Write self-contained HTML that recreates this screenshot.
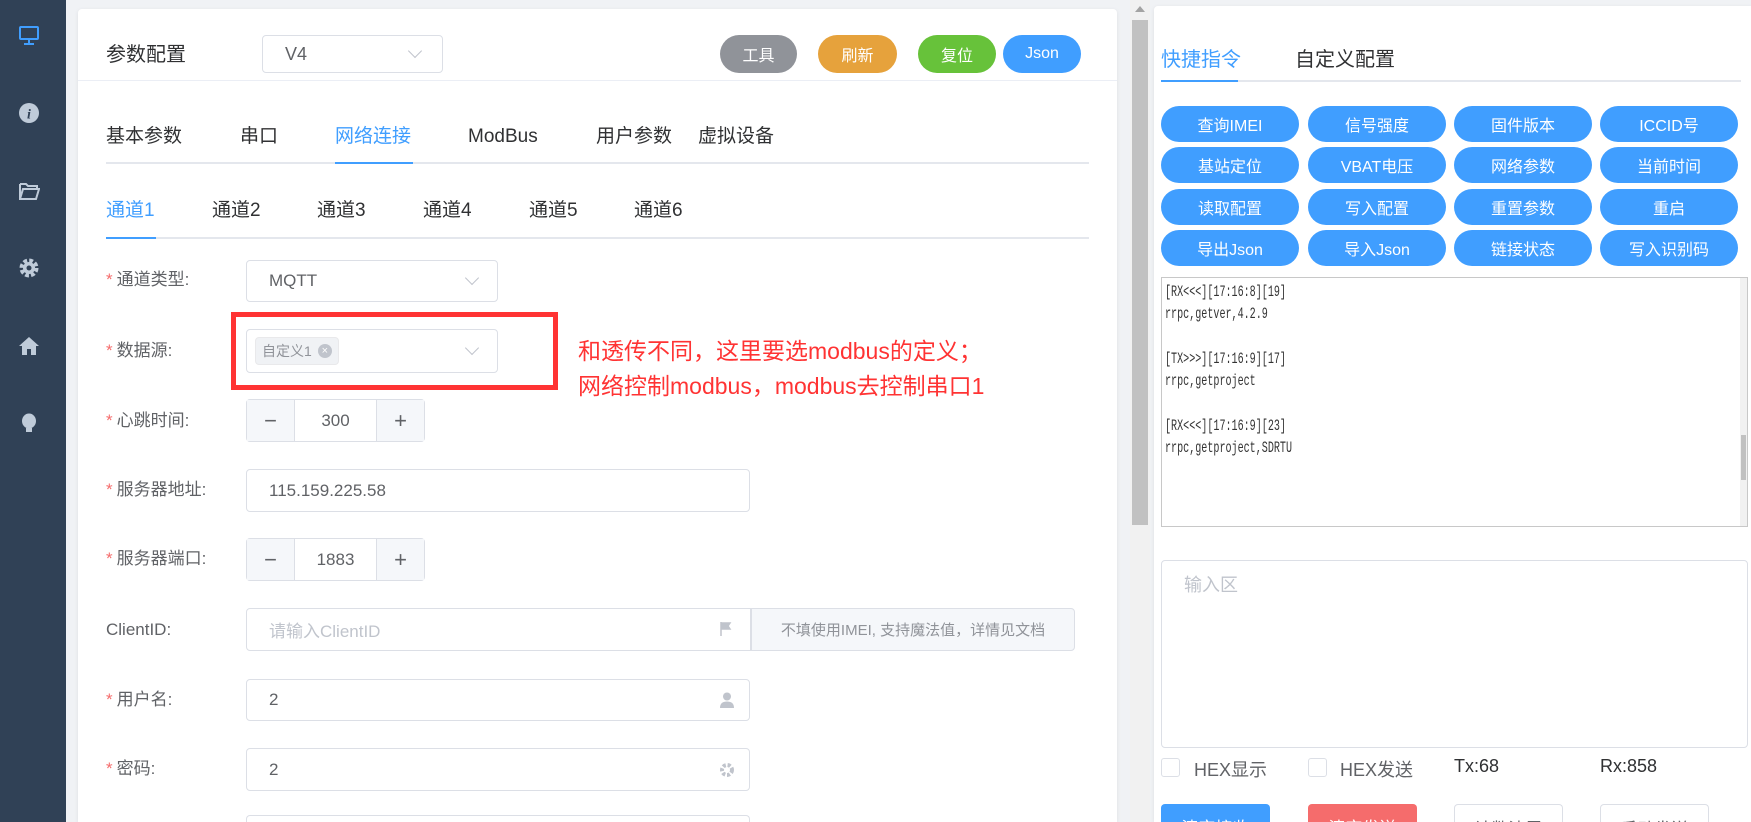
<!DOCTYPE html>
<html><head><meta charset="utf-8"><style>
*{box-sizing:border-box;margin:0;padding:0}
html,body{width:1751px;height:822px;overflow:hidden}
body{background:#f0f2f5;font-family:"Liberation Sans","Noto Sans CJK SC",sans-serif;position:relative;color:#303133}
.a{position:absolute}
.side{left:0;top:0;width:66px;height:822px;background:#304156}
.card{background:#fff;border-radius:4px;box-shadow:0 1px 4px rgba(0,0,0,.08)}
.btn{position:absolute;border-radius:20px;color:#fff;font-size:16px;display:flex;align-items:center;justify-content:center}
.inp{position:absolute;border:1px solid #dcdfe6;border-radius:4px;background:#fff;font-size:17px;color:#606266;display:flex;align-items:center;padding-left:22px}
.lbl{position:absolute;font-size:17px;color:#606266;left:106px;line-height:24px}
.lbl b{color:#f56c6c;font-weight:normal;margin-right:4px}
.tab{position:absolute;font-size:19px;color:#303133;line-height:26px;height:26px}
.num{position:absolute;border:1px solid #dcdfe6;border-radius:4px;background:#fff;display:flex;font-size:17px;color:#606266}
.num span{width:47px;background:#f5f7fa;display:flex;align-items:center;justify-content:center;font-size:22px;color:#606266}
.num i{flex:1;font-style:normal;display:flex;align-items:center;justify-content:center;border-left:1px solid #dcdfe6;border-right:1px solid #dcdfe6}
.chev{position:absolute;width:10px;height:10px;border-right:1.5px solid #c0c4cc;border-bottom:1.5px solid #c0c4cc;transform:rotate(45deg)}
.qb{position:absolute;width:138px;height:36px;background:#409eff;border-radius:18px;color:#fff;font-size:16px;display:flex;align-items:center;justify-content:center}
.log{font-family:"Liberation Mono",monospace;font-size:16px;line-height:22.3px;color:#333;transform:scaleX(0.63);transform-origin:0 0;white-space:pre}
.cb{position:absolute;width:19px;height:19px;border:1px solid #dcdfe6;border-radius:3px;background:#fff}
</style></head><body>
<div class="a side">
<svg class="a" style="left:18px;top:24px" width="22" height="22" viewBox="0 0 22 22" fill="none" stroke="#409eff" stroke-width="2"><rect x="2" y="3" width="18" height="12" rx="1"/><path d="M11 15v4M6 20h10"/></svg>
<svg class="a" style="left:19px;top:103px" width="20" height="20" viewBox="0 0 20 20"><circle cx="10" cy="10" r="10" fill="#bfcbd9"/><text x="10" y="15.5" text-anchor="middle" font-family="Liberation Serif" font-style="italic" font-weight="bold" font-size="14" fill="#304156">i</text></svg>
<svg class="a" style="left:18px;top:181px" width="22" height="20" viewBox="0 0 22 20" fill="none" stroke="#bfcbd9" stroke-width="2"><path d="M2 3h6l2 2h9v3M2 3v15h16l3-10H5L2 18"/></svg>
<svg class="a" style="left:18px;top:257px" width="22" height="22" viewBox="0 0 22 22"><circle cx="11" cy="11" r="7" fill="none" stroke="#bfcbd9" stroke-width="5" stroke-dasharray="3.5 2"/><circle cx="11" cy="11" r="6" fill="#bfcbd9"/><circle cx="11" cy="11" r="2.5" fill="#304156"/></svg>
<svg class="a" style="left:18px;top:336px" width="22" height="20" viewBox="0 0 22 20"><path d="M11 1L1 10h3v9h5v-6h4v6h5v-9h3z" fill="#bfcbd9"/></svg>
<svg class="a" style="left:20px;top:413px" width="18" height="22" viewBox="0 0 18 22"><ellipse cx="9" cy="8" rx="7" ry="7.5" fill="#bfcbd9"/><rect x="6" y="15" width="6" height="4" fill="#bfcbd9"/></svg>
</div>

<div class="a card" style="left:78px;top:9px;width:1039px;height:813px;border-radius:4px 4px 0 0"></div>
<div class="a" style="left:106px;top:38px;font-size:20px;color:#303133">参数配置</div>
<div class="inp" style="left:262px;top:35px;width:181px;height:38px;font-size:18px">V4</div>
<div class="chev" style="left:410px;top:46px"></div>
<div class="btn" style="left:720px;top:35px;width:77px;height:38px;background:#909399">工具</div>
<div class="btn" style="left:818px;top:35px;width:79px;height:38px;background:#e6a23c">刷新</div>
<div class="btn" style="left:918px;top:35px;width:78px;height:38px;background:#67c23a">复位</div>
<div class="btn" style="left:1003px;top:35px;width:78px;height:38px;background:#409eff">Json</div>
<div class="a" style="left:78px;top:80px;width:1039px;height:1px;background:#ebeef5"></div>

<div class="tab" style="left:106px;top:124px">基本参数</div>
<div class="tab" style="left:240px;top:124px">串口</div>
<div class="tab" style="left:335px;top:124px;color:#409eff">网络连接</div>
<div class="tab" style="left:468px;top:124px">ModBus</div>
<div class="tab" style="left:596px;top:124px">用户参数</div>
<div class="tab" style="left:698px;top:124px">虚拟设备</div>
<div class="a" style="left:106px;top:162px;width:983px;height:2px;background:#e4e7ed"></div>
<div class="a" style="left:335px;top:162px;width:78px;height:2px;background:#409eff"></div>

<div class="tab" style="left:106px;top:198px;color:#409eff">通道1</div>
<div class="tab" style="left:212px;top:198px">通道2</div>
<div class="tab" style="left:317px;top:198px">通道3</div>
<div class="tab" style="left:423px;top:198px">通道4</div>
<div class="tab" style="left:529px;top:198px">通道5</div>
<div class="tab" style="left:634px;top:198px">通道6</div>
<div class="a" style="left:106px;top:237px;width:983px;height:2px;background:#e4e7ed"></div>
<div class="a" style="left:106px;top:237px;width:50px;height:2px;background:#409eff"></div>

<div class="lbl" style="top:268px"><b>*</b>通道类型:</div>
<div class="inp" style="left:246px;top:260px;width:252px;height:42px">MQTT</div>
<div class="chev" style="left:467px;top:273px"></div>

<div class="lbl" style="top:339px"><b>*</b>数据源:</div>
<div class="inp" style="left:246px;top:329px;width:252px;height:44px;padding-left:8px"><span style="background:#f0f2f5;border:1px solid #e9e9eb;border-radius:4px;font-size:14px;color:#909399;padding:3px 6px;display:flex;align-items:center">自定义1<span style="display:inline-block;width:14px;height:14px;border-radius:7px;background:#c0c4cc;color:#fff;font-size:11px;line-height:14px;text-align:center;margin-left:6px">×</span></span></div>
<div class="chev" style="left:467px;top:343px"></div>
<div class="a" style="left:231px;top:312px;width:327px;height:78px;border:5px solid #f33"></div>
<div class="a" style="left:578px;top:334px;font-size:23px;color:#f33;line-height:35px">和透传不同，这里要选modbus的定义；<br>网络控制modbus，modbus去控制串口1</div>

<div class="lbl" style="top:409px"><b>*</b>心跳时间:</div>
<div class="num" style="left:246px;top:399px;width:179px;height:43px"><span>−</span><i>300</i><span>+</span></div>

<div class="lbl" style="top:478px"><b>*</b>服务器地址:</div>
<div class="inp" style="left:246px;top:469px;width:504px;height:43px">115.159.225.58</div>

<div class="lbl" style="top:547px"><b>*</b>服务器端口:</div>
<div class="num" style="left:246px;top:538px;width:179px;height:43px"><span>−</span><i>1883</i><span>+</span></div>

<div class="lbl" style="top:618px">ClientID:</div>
<div class="inp" style="left:246px;top:608px;width:505px;height:43px;color:#c0c4cc;border-radius:4px 0 0 4px">请输入ClientID</div>
<svg class="a" style="left:720px;top:622px" width="12" height="14" viewBox="0 0 12 14"><path d="M1 0v14M1 1h9l-2 3 2 3H1" fill="#c0c4cc" stroke="#c0c4cc" stroke-width="1.5"/></svg>
<div class="a" style="left:751px;top:608px;width:324px;height:43px;background:#f5f7fa;border:1px solid #dcdfe6;border-radius:0 4px 4px 0;font-size:15px;color:#909399;display:flex;align-items:center;justify-content:center">不填使用IMEI, 支持魔法值，详情见文档</div>

<div class="lbl" style="top:688px"><b>*</b>用户名:</div>
<div class="inp" style="left:246px;top:679px;width:504px;height:42px">2</div>
<svg class="a" style="left:720px;top:692px" width="14" height="16" viewBox="0 0 14 16"><circle cx="7" cy="4.5" r="4" fill="#c0c4cc"/><path d="M0 16c0-5 3-6.5 7-6.5s7 1.5 7 6.5z" fill="#c0c4cc"/></svg>

<div class="lbl" style="top:757px"><b>*</b>密码:</div>
<div class="inp" style="left:246px;top:748px;width:504px;height:43px">2</div>
<svg class="a" style="left:719px;top:762px" width="16" height="16" viewBox="0 0 16 16"><circle cx="8" cy="8" r="5" fill="none" stroke="#c0c4cc" stroke-width="4" stroke-dasharray="3 1.8"/><circle cx="8" cy="8" r="2" fill="#fff"/></svg>
<div class="inp" style="left:246px;top:815px;width:504px;height:7px;border-bottom:none;border-radius:4px 4px 0 0"></div>

<div class="a" style="left:1130px;top:0;width:20px;height:822px;background:#f1f1f1"></div>
<div class="a" style="left:1135px;top:6px;width:0;height:0;border-left:5px solid transparent;border-right:5px solid transparent;border-bottom:6px solid #a3a3a3"></div>
<div class="a" style="left:1132px;top:20px;width:16px;height:505px;background:#c1c1c1"></div>

<div class="a card" style="left:1154px;top:6px;width:597px;height:816px;border-radius:4px 0 0 0"></div>
<div class="a" style="left:1161px;top:43px;font-size:20px;color:#409eff">快捷指令</div>
<div class="a" style="left:1295px;top:43px;font-size:20px;color:#303133">自定义配置</div>
<div class="a" style="left:1161px;top:80px;width:580px;height:2px;background:#e4e7ed"></div>
<div class="a" style="left:1161px;top:80px;width:77px;height:2px;background:#409eff"></div>

<div class="qb" style="left:1161px;top:106px">查询IMEI</div>
<div class="qb" style="left:1308px;top:106px">信号强度</div>
<div class="qb" style="left:1454px;top:106px">固件版本</div>
<div class="qb" style="left:1600px;top:106px">ICCID号</div>
<div class="qb" style="left:1161px;top:147px">基站定位</div>
<div class="qb" style="left:1308px;top:147px">VBAT电压</div>
<div class="qb" style="left:1454px;top:147px">网络参数</div>
<div class="qb" style="left:1600px;top:147px">当前时间</div>
<div class="qb" style="left:1161px;top:189px">读取配置</div>
<div class="qb" style="left:1308px;top:189px">写入配置</div>
<div class="qb" style="left:1454px;top:189px">重置参数</div>
<div class="qb" style="left:1600px;top:189px">重启</div>
<div class="qb" style="left:1161px;top:230px">导出Json</div>
<div class="qb" style="left:1308px;top:230px">导入Json</div>
<div class="qb" style="left:1454px;top:230px">链接状态</div>
<div class="qb" style="left:1600px;top:230px">写入识别码</div>

<div class="a" style="left:1161px;top:277px;width:587px;height:250px;border:1px solid #c8c8c8;overflow:hidden">
<div class="a log" style="left:3px;top:3px">[RX&lt;&lt;&lt;][17:16:8][19]
rrpc,getver,4.2.9

[TX&gt;&gt;&gt;][17:16:9][17]
rrpc,getproject

[RX&lt;&lt;&lt;][17:16:9][23]
rrpc,getproject,SDRTU</div>
<div class="a" style="right:0;top:0;width:7px;height:248px;background:#f1f1f1"></div>
<div class="a" style="right:1px;top:157px;width:5px;height:45px;background:#c1c1c1"></div>
</div>

<div class="a" style="left:1161px;top:560px;width:587px;height:188px;border:1px solid #dcdfe6;border-radius:4px;padding:10px 22px;font-size:18px;color:#c0c4cc">输入区</div>

<div class="cb" style="left:1161px;top:758px"></div>
<div class="a" style="left:1194px;top:756px;font-size:18px;color:#606266">HEX显示</div>
<div class="cb" style="left:1308px;top:758px"></div>
<div class="a" style="left:1340px;top:756px;font-size:18px;color:#606266">HEX发送</div>
<div class="a" style="left:1454px;top:756px;font-size:18px;color:#303133">Tx:68</div>
<div class="a" style="left:1600px;top:756px;font-size:18px;color:#303133">Rx:858</div>

<div class="a" style="left:1161px;top:804px;width:109px;height:18px;background:#409eff;border-radius:4px 4px 0 0;overflow:hidden;color:#fff;font-size:17px;text-align:center;padding-top:10px">清空接收</div>
<div class="a" style="left:1308px;top:804px;width:109px;height:18px;background:#f56c6c;border-radius:4px 4px 0 0;overflow:hidden;color:#fff;font-size:17px;text-align:center;padding-top:10px">清空发送</div>
<div class="a" style="left:1454px;top:804px;width:109px;height:18px;background:#fff;border:1px solid #dcdfe6;border-bottom:none;border-radius:4px 4px 0 0;overflow:hidden;color:#606266;font-size:17px;text-align:center;padding-top:10px">计数清零</div>
<div class="a" style="left:1600px;top:804px;width:109px;height:18px;background:#fff;border:1px solid #dcdfe6;border-bottom:none;border-radius:4px 4px 0 0;overflow:hidden;color:#606266;font-size:17px;text-align:center;padding-top:10px">手动发送</div>
</body></html>
